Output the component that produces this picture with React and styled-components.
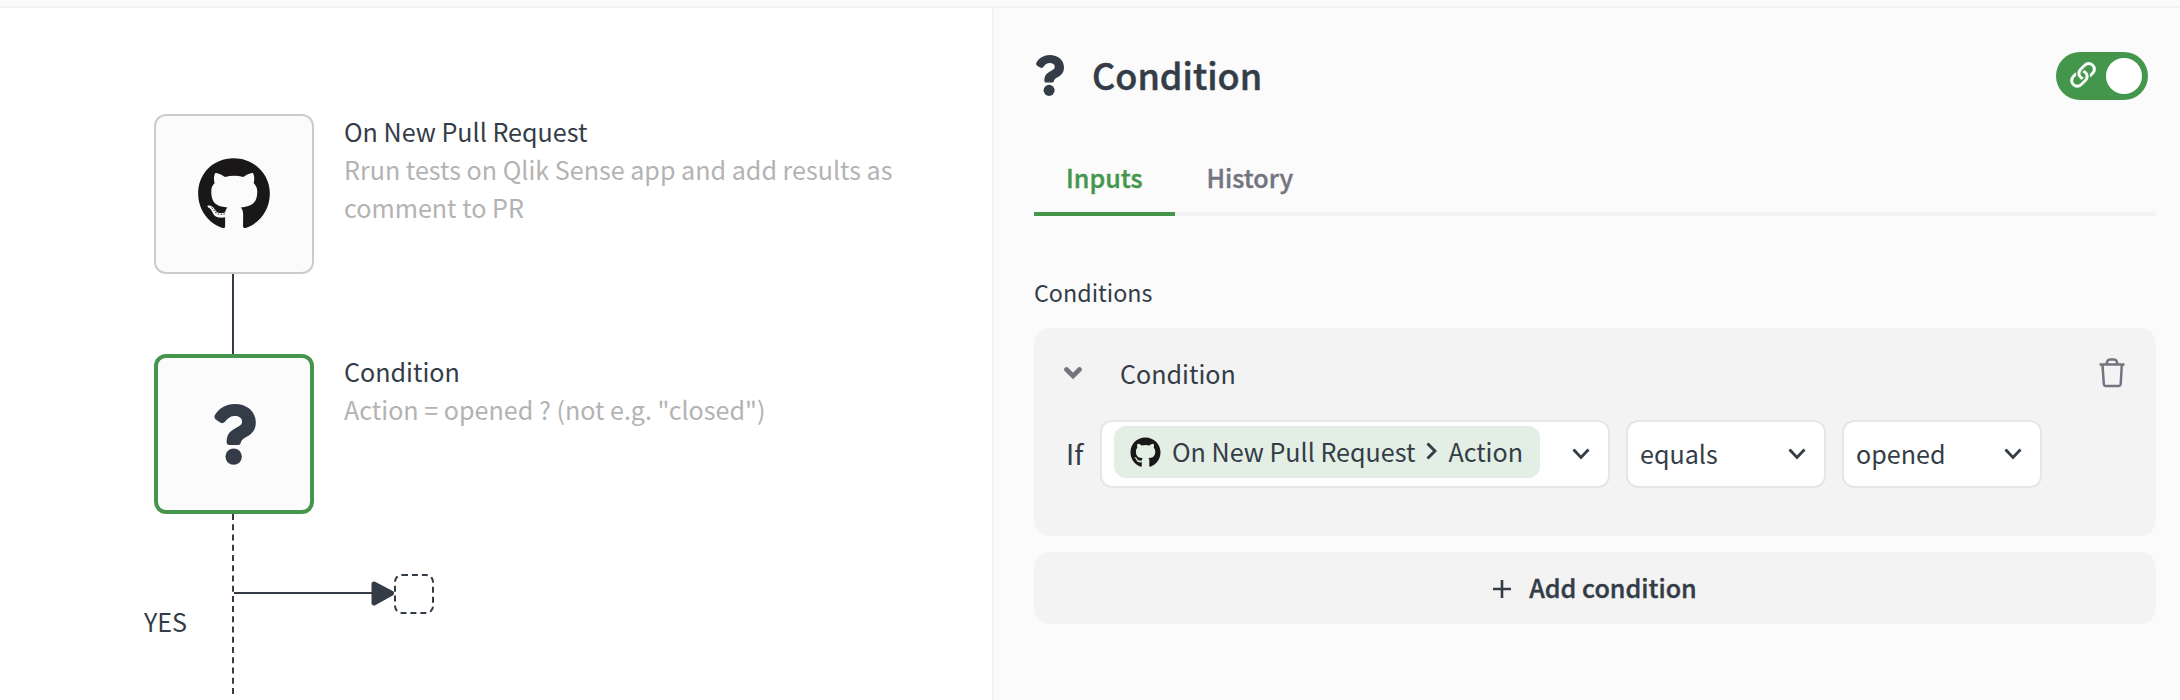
import styled, { createGlobalStyle } from "styled-components";
import { FaGithub } from "react-icons/fa";
import { BsLink45Deg } from "react-icons/bs";

const color = {
  text: "#343d47",
  muted: "#b3b3b3",
  gray: "#737480",
  green: "#44964d",
  panel: "#fbfbfb",
  card: "#f3f3f3",
};

export default function App() {
  return (
    <>
      <GlobalStyle />
      <Page>
        <TopStrip />
        <Main>
          <FlowCanvas />
          <Sidebar />
        </Main>
      </Page>
    </>
  );
}

const FlowCanvas = () => (
  <Canvas>
    {blocks.map((v, i) => (
      <div key={v.title}>
        {i > 0 && <Stem />}
        <BlockRow>
          <Block $active={v.active}>{v.icon}</Block>
          <BlockText>
            <h3>{v.title}</h3>
            <p>{v.content}</p>
          </BlockText>
        </BlockRow>
      </div>
    ))}
    <Branch>
      <BranchLabel>YES</BranchLabel>
      <BranchBody>
        <svg width="160" height="40" viewBox="0 0 160 40">
          <path d="M0 19H140" stroke={color.text} strokeWidth="2" />
          <path
            d="M140 10L157.500 19.300L140 29Z"
            fill={color.text}
            stroke={color.text}
            strokeWidth="5"
            strokeLinejoin="round"
          />
        </svg>
        <DropTarget />
      </BranchBody>
    </Branch>
  </Canvas>
);

const Sidebar = () => (
  <Panel>
    <PanelHeader>
      <QuestionIcon width="28" height="41" viewBox="0 0 124 182" />
      <h1>Condition</h1>
      <Toggle>
        <BsLink45Deg stroke="#fff" strokeWidth={0.35} />
        <Knob />
      </Toggle>
    </PanelHeader>
    <Tabs>
      <Tab $active>Inputs</Tab>
      <Tab>History</Tab>
    </Tabs>
    <Label>Conditions</Label>
    <Card>
      <CardHeader>
        <Chevron width="18" height="14" viewBox="0 0 18 14">
          <path
            d="M2.500 3.500L9 10L15.500 3.500"
            stroke={color.gray}
            strokeWidth="4.600"
            strokeLinecap="round"
          />
        </Chevron>
        <span>Condition</span>
        <TrashIcon />
      </CardHeader>
      <Rule>
        <If>If</If>
        <Select $width={510}>
          <Tag>
            <FaGithub />
            <span>On New Pull Request</span>
            <TagArrow width="11" height="20" viewBox="0 0 11 20">
              <path d="M1.500 1.500L9 9L1.500 16.500" stroke={color.text} strokeWidth="3" />
            </TagArrow>
            <span>Action</span>
          </Tag>
          <DownArrow />
        </Select>
        <Select $width={200}>
          <Value>equals</Value>
          <DownArrow />
        </Select>
        <Select $width={200}>
          <Value>opened</Value>
          <DownArrow />
        </Select>
      </Rule>
    </Card>
    <AddButton>
      <svg width="18" height="18" viewBox="0 0 18 18">
        <path d="M0 9H18M9 0V18" stroke={color.text} strokeWidth="2.600" />
      </svg>
      <span>Add condition</span>
    </AddButton>
  </Panel>
);

const QuestionIcon = (props) => (
  <svg fill={color.text} {...props}>
    <path d="M3 45Q-2 40 2 33C14 13 36 0 61 0C98 0 124 22 124 55C124 78 112 89 97 98C85 105 81 109 79 116Q78 122 72 122H44Q37 122 37 115C37 91 45 83 62 73C76 65 83 62 83 52C83 42 74 36 61 36C49 36 41 42 32 53Q26 60 19 56Q12 52 3 45Z" />
    <circle cx="58" cy="157" r="24.500" />
  </svg>
);

const DownArrow = () => (
  <Chevron width="18" height="12" viewBox="0 0 18 12">
    <path d="M1.500 1.500L9 9.500L16.500 1.500" stroke={color.text} strokeWidth="2.800" />
  </Chevron>
);

const TrashIcon = () => (
  <svg
    width="26"
    height="30"
    viewBox="0 0 26 30"
    fill="none"
    stroke={color.gray}
    strokeWidth="2.500"
    strokeLinejoin="round"
  >
    <path d="M0.500 6.500H25.500" />
    <path d="M7.500 6L8.300 3.500Q9 1.500 11 1.500H15Q17 1.500 17.700 3.500L18.500 6" />
    <path d="M3.500 7L4.800 26Q5 28 7 28H19.500Q21.500 28 21.700 26L22.800 7" />
  </svg>
);

const GlobalStyle = createGlobalStyle`
  * {
    box-sizing: border-box;
  }

  body {
    margin: 0;
    background: #fff;
    color: ${color.text};
    font-family: "Noto Sans CJK SC", "Noto Sans", sans-serif;
    font-size: 25.1px;
    line-height: 38px;
  }

  h1, h3, p {
    margin: 0;
  }

  svg {
    display: block;
    flex: none;
  }
`;

const Page = styled.div`
  display: flex;
  flex-direction: column;
  width: 2180px;
  height: 700px;
  overflow: hidden;
`;

const TopStrip = styled.div`
  height: 8px;
  flex: none;
  background: ${color.panel};
  border-bottom: 2px solid ${color.card};
`;

const Main = styled.div`
  display: flex;
  flex: 1;
`;

const Canvas = styled.div`
  width: 992px;
  padding-top: 106px;
`;

const BlockRow = styled.div`
  display: flex;
  height: 160px;
  padding-left: 154px;
`;

const Block = styled.div`
  display: flex;
  align-items: center;
  justify-content: center;
  width: 160px;
  height: 160px;
  border: ${({ $active }) =>
    $active ? `4px solid ${color.green}` : "2px solid #ccc"};
  border-radius: 12px;
  background: ${color.panel};
`;

const BlockText = styled.div`
  width: 580px;
  margin: -2px 0 0 30px;

  h3 {
    font-size: inherit;
    font-weight: 400;
  }

  p {
    color: ${color.muted};
  }
`;

const Stem = styled.div`
  width: 2px;
  height: 80px;
  margin-left: 232px;
  background: ${color.text};
`;

const Branch = styled.div`
  display: flex;
  height: 180px;
`;

const BranchLabel = styled.div`
  width: 232px;
  padding: 88px 0 0 144px;
`;

const BranchBody = styled.div`
  display: flex;
  padding-top: 60px;
  border-left: 2px dashed ${color.text};
`;

const DropTarget = styled.div`
  width: 40px;
  height: 40px;
  border: 2px dashed ${color.text};
  border-radius: 8px;
`;

const Panel = styled.div`
  flex: 1;
  padding: 44px 24px 0 40px;
  background: ${color.panel};
  border-left: 2px solid ${color.card};
`;

const PanelHeader = styled.div`
  display: flex;
  height: 48px;
  padding: 0 8px 0 2px;

  & > svg {
    margin-top: 3px;
  }

  h1 {
    flex: 1;
    margin-left: 28px;
    font-size: 36px;
    font-weight: 500;
    line-height: 44px;
    -webkit-text-stroke: 0.5px currentColor;
  }
`;

const Toggle = styled.div`
  display: flex;
  align-items: center;
  justify-content: space-between;
  width: 92px;
  height: 48px;
  padding: 0 6px 0 9px;
  border-radius: 24px;
  background: ${color.green};
  color: #fff;
  font-size: 36px;
`;

const Knob = styled.div`
  width: 36px;
  height: 36px;
  border-radius: 50%;
  background: #fff;
`;

const Tabs = styled.div`
  display: flex;
  height: 68px;
  margin-top: 48px;
  box-shadow: inset 0 -4px 0 ${color.card};
`;

const Tab = styled.div`
  padding: 10px 32px 0;
  font-weight: 500;
  color: ${({ $active }) => ($active ? color.green : color.gray)};
  border-bottom: 4px solid
    ${({ $active }) => ($active ? color.green : "transparent")};
  -webkit-text-stroke: 0.4px currentColor;
`;

const Label = styled.div`
  margin-top: 56px;
  font-size: 23.3px;
  line-height: 40px;
`;

const Card = styled.div`
  height: 208px;
  margin-top: 16px;
  padding: 25px 31px 0 30px;
  border-radius: 16px;
  background: ${color.card};
`;

const CardHeader = styled.div`
  display: flex;
  align-items: center;
  height: 40px;

  span {
    flex: 1;
    margin-left: 38px;
  }
`;

const Chevron = styled.svg`
  fill: none;
`;

const Rule = styled.div`
  display: flex;
  gap: 16px;
  margin-top: 27px;
`;

const If = styled.div`
  width: 20px;
  padding-left: 2px;
  font-size: 28px;
  line-height: 67px;
`;

const Select = styled.div`
  display: flex;
  align-items: center;
  justify-content: space-between;
  width: ${({ $width }) => $width}px;
  height: 68px;
  padding: 0 18px 0 12px;
  border: 2px solid #e6e6e6;
  border-radius: 12px;
  background: #fff;
`;

const Value = styled.span`
  padding-bottom: 2px;
`;

const Tag = styled.div`
  display: flex;
  align-items: center;
  width: 426px;
  height: 52px;
  margin-bottom: 4px;
  padding-left: 16px;
  border-radius: 12px;
  background: #e3eee4;

  & > svg:first-child {
    margin-right: 11px;
    color: #191717;
    font-size: 31px;
  }

  span {
    padding-bottom: 2px;
  }
`;

const TagArrow = styled.svg`
  margin: 0 11px;
  fill: none;
`;

const AddButton = styled.div`
  display: flex;
  align-items: center;
  justify-content: center;
  gap: 18px;
  height: 72px;
  margin-top: 16px;
  border-radius: 16px;
  background: ${color.card};
  font-weight: 500;
  -webkit-text-stroke: 0.4px currentColor;

  svg {
    margin-top: 2px;
  }

  span {
    padding-bottom: 2px;
  }
`;

const blocks = [
  {
    title: "On New Pull Request",
    content: "Rrun tests on Qlik Sense app and add results as comment to PR",
    icon: <FaGithub size={74} color="#191717" />,
  },
  {
    title: "Condition",
    content: 'Action = opened ? (not e.g. "closed")',
    icon: <QuestionIcon width="44" height="61" viewBox="-6 0 130 182" />,
    active: true,
  },
];
